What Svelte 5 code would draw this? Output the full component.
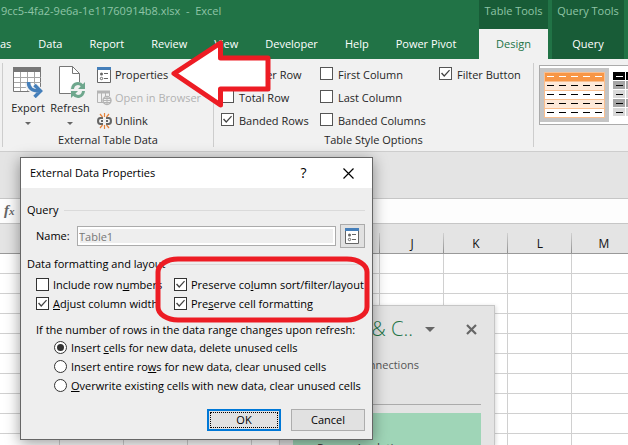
<script>
  const tabs = ['as', 'Data', 'Report', 'Review', 'View', 'Developer', 'Help', 'Power Pivot'];
  const columns = 'DEFGHIJKLM'.split('');
  const rows = Array.from({ length: 10 }, (_, i) => i + 1);

  const styleOptions = [
    [
      { label: 'Header Row', checked: true },
      { label: 'Total Row', checked: false },
      { label: 'Banded Rows', checked: true }
    ],
    [
      { label: 'First Column', checked: false },
      { label: 'Last Column', checked: false },
      { label: 'Banded Columns', checked: false }
    ],
    [{ label: 'Filter Button', checked: true }]
  ];

  const tableStyles = [
    { name: 'Orange', selected: true, line: '#fabf8f', colors: ['#f79646', '#fde9d9', '#ffffff', '#fde9d9', '#ffffff'] },
    { name: 'Black', selected: false, line: '#ffffff', colors: ['#000000', '#a6a6a6', '#d9d9d9', '#a6a6a6', '#d9d9d9'] }
  ];

  // [before, access key, after]
  const formatOptions = [
    { text: ['Include row n', 'u', 'mbers'], checked: false },
    { text: ['Preserve co', 'l', 'umn sort/filter/layout'], checked: true },
    { text: ['', 'A', 'djust column width'], checked: true },
    { text: ['Pre', 's', 'erve cell formatting'], checked: true }
  ];

  const refreshOptions = [
    { value: 'insert-cells', text: ['Insert ', 'c', 'ells for new data, delete unused cells'] },
    { value: 'insert-rows', text: ['Insert entire ro', 'w', 's for new data, clear unused cells'] },
    { value: 'overwrite', text: ['', 'O', 'verwrite existing cells with new data, clear unused cells'] }
  ];

  let refreshMode = 'insert-cells';
</script>

<div class="app">
  <header class="titlebar">
    <div class="main-tabs">
      <div class="filename">9cc5-4fa2-9e6a-1e11760914b8.xlsx&nbsp; -&nbsp; Excel</div>
      <nav class="tabs">
        {#each tabs as tab}
          <button type="button" class="tab">{tab}</button>
        {/each}
      </nav>
    </div>
    <div class="context">
      <div class="context-title">Table Tools</div>
      <button type="button" class="tab context-tab active">Design</button>
    </div>
    <div class="context query">
      <div class="context-title">Query Tools</div>
      <button type="button" class="tab context-tab">Query</button>
    </div>
  </header>

  <section class="ribbon">
    <div class="group external">
      <div class="group-body">
        <button type="button" class="big">
          <svg width="30" height="32" viewBox="0 0 30 32" aria-hidden="true">
            <path d="M.5 1.500h27v24H.5z" fill="#fff" stroke="#777" />
            <path d="M0 1h28v5H0z" fill="#777" />
            <path d="M1 11.500h27M1 16.500h27M1 21.500h27M7.500 6v19M14.500 6v19M21.500 6v19" stroke="#a6a6a6" />
            <path d="M15 17c0 6 4 8 12 8M21 19l6.500 6-6.500 6" fill="none" stroke="#f1f1f1" stroke-width="6" />
            <path d="M15.500 16c0 7 4 9 11 9M21.500 19l6 6-6 6" fill="none" stroke="#457fba" stroke-width="3.500" />
          </svg>
          <span>Export</span>
          <span class="caret"></span>
        </button>
        <button type="button" class="big">
          <svg width="30" height="32" viewBox="0 0 30 32" aria-hidden="true">
            <path d="M4.500.5h13l7 7v20h-20z" fill="#fff" stroke="#777" />
            <path d="M17.500.5v7h7" fill="none" stroke="#777" />
            <circle cx="23" cy="24" r="8" fill="#f1f1f1" />
            <g fill="none" stroke="#6ea78d" stroke-width="3">
              <path d="M17.500 23c.5-6 7-7 10-3M28.500 25c-.5 6-7 7-10 3" />
            </g>
            <path d="M30 16v7h-7zM16 32v-7h7z" fill="#6ea78d" />
          </svg>
          <span>Refresh</span>
          <span class="caret"></span>
        </button>
        <div class="small-list">
          <button type="button" class="small">
            <svg width="15" height="16" viewBox="0 0 15 16" aria-hidden="true">
              <path d="M.5.5h13v15H.5z" fill="#fff" stroke="#666" />
              <path d="M0 0h14v3H0z" fill="#457fba" />
              <circle cx="4.500" cy="7" r="1.500" fill="#666" />
              <circle cx="4.500" cy="11.500" r="1.200" fill="#fff" stroke="#666" />
              <path d="M7 6.500h4M7 11.500h4" stroke="#666" />
            </svg>
            Properties
          </button>
          <button type="button" class="small" disabled>
            <svg width="15" height="16" viewBox="0 0 15 16" fill="none" stroke="#b4b4b4" aria-hidden="true">
              <path d="M6 12.500H.5v-11h12V6M4.500 2v10M8.500 2v4" />
              <path d="M0 2h13" stroke-width="3" />
              <circle cx="10" cy="10.500" r="4" fill="#f1f1f1" stroke-width="1.500" />
              <path d="M6 10.500h8M10 6.500v8M7 8.500h6M7 12.500h6" />
            </svg>
            Open in Browser
          </button>
          <button type="button" class="small">
            <svg width="15" height="16" viewBox="0 0 15 16" fill="none" aria-hidden="true">
              <path d="M6 5H3.500Q1 5 1 8t2.500 3H6M9 5h2.500Q14 5 14 8t-2.500 3H9M4 8h2M9 8h2" stroke="#666" stroke-width="2" />
              <path d="M7.500 0v4M3 1l2.500 3M12 1L9.500 4M7.500 12v4M3 15l2.500-3M12 15l-2.500-3" stroke="#e8833a" stroke-width="1.200" />
            </svg>
            Unlink
          </button>
        </div>
      </div>
      <div class="group-title">External Table Data</div>
    </div>

    <div class="group options">
      <div class="group-body">
        {#each styleOptions as column}
          <div class="option-column">
            {#each column as option}
              <label class="option">
                <input type="checkbox" checked={option.checked} />
                {option.label}
              </label>
            {/each}
          </div>
        {/each}
      </div>
      <div class="group-title">Table Style Options</div>
    </div>

    <div class="gallery">
      {#each tableStyles as style}
        <button type="button" class="thumb" class:selected={style.selected} aria-label={style.name}>
          <svg width="61" height="46" viewBox="0 0 61 46">
            <rect width="61" height="46" fill={style.line} />
            {#each style.colors as color, r}
              {#if style.selected}
                <rect x="1" y={r * 9 + 1} width="59" height="8" fill={color} />
              {/if}
              {#each [0, 1, 2, 3, 4] as c}
                {#if !style.selected}
                  <rect x={c * 13} y={r * 9} width="12" height="8" fill={color} />
                {/if}
                <rect
                  x={c * (style.selected ? 12 : 13) + 3}
                  y={r * 9 + 4}
                  width="7"
                  height="1"
                  fill={r === 0 ? '#fff' : '#000'}
                />
              {/each}
            {/each}
          </svg>
        </button>
      {/each}
    </div>
  </section>

  <div class="formula-row">
    <span class="fx">f<small>x</small></span>
    <input type="text" aria-label="Formula bar" />
  </div>

  <main class="sheet">
    <table>
      <thead>
        <tr>
          {#each columns as column}
            <th scope="col">{column}</th>
          {/each}
        </tr>
      </thead>
      <tbody>
        {#each rows as row (row)}
          <tr>
            {#each columns as column}
              <td></td>
            {/each}
          </tr>
        {/each}
      </tbody>
    </table>
  </main>

  <aside class="pane">
    <div class="pane-header">
      <h2>Queries &amp; C..</h2>
      <span class="caret pane-caret"></span>
      <button type="button" class="pane-close" aria-label="Close pane">
        <svg width="11" height="11" viewBox="0 0 11 11" aria-hidden="true">
          <path d="M1 1l9 9M10 1l-9 9" stroke="#666" stroke-width="2.200" />
        </svg>
      </button>
    </div>
    <div class="pane-tabs">Queries | Connections</div>
    <div class="query-item">Power Analytics</div>
  </aside>

  <svg class="arrow" width="104" height="74" viewBox="0 0 104 74" aria-hidden="true">
    <path d="M6 36.500L52.500 6v15H100v31H52.500v16z" fill="#fff" stroke="#ed1c24" stroke-width="5" stroke-linejoin="round" />
  </svg>

  <div class="dialog" role="dialog" aria-labelledby="dialog-title">
    <div class="dialog-header">
      <h1 id="dialog-title">External Data Properties</h1>
      <button type="button" class="icon-button" aria-label="Help">?</button>
      <button type="button" class="icon-button" aria-label="Close">
        <svg width="11" height="11" viewBox="0 0 11 11" aria-hidden="true">
          <path d="M.5.5l10 10M10.500.5l-10 10" stroke="#000" stroke-width="1.200" />
        </svg>
      </button>
    </div>

    <form class="dialog-body" on:submit|preventDefault>
      <div class="section-title">Query</div>
      <div class="name-row">
        <label for="query-name">Name:</label>
        <input id="query-name" class="name-input" type="text" value="Table1" disabled />
        <button type="button" class="name-button" aria-label="Connection properties">
          <svg width="15" height="16" viewBox="0 0 15 16" aria-hidden="true">
            <path d="M.5.5h13v15H.5z" fill="#fff" stroke="#666" />
            <path d="M0 0h14v3H0z" fill="#457fba" />
            <circle cx="4.500" cy="7" r="1.500" fill="#666" />
            <circle cx="4.500" cy="11.500" r="1.200" fill="#fff" stroke="#666" />
            <path d="M7 6.500h4M7 11.500h4" stroke="#666" />
          </svg>
        </button>
      </div>

      <div class="section-title formatting">Data formatting and layout</div>
      <div class="format-grid">
        {#each formatOptions as option}
          <label class="choice">
            <input type="checkbox" checked={option.checked} />
            <span>{option.text[0]}<u>{option.text[1]}</u>{option.text[2]}</span>
          </label>
        {/each}
      </div>

      <fieldset>
        <legend>If the number of rows in the data range changes upon refresh:</legend>
        {#each refreshOptions as option}
          <label class="choice">
            <input type="radio" name="refresh" value={option.value} bind:group={refreshMode} />
            <span>{option.text[0]}<u>{option.text[1]}</u>{option.text[2]}</span>
          </label>
        {/each}
      </fieldset>

      <div class="buttons">
        <button type="submit" class="btn primary">OK</button>
        <button type="button" class="btn">Cancel</button>
      </div>
    </form>

    <svg class="highlight" width="216" height="68" viewBox="0 0 216 68" aria-hidden="true">
      <rect x="3" y="3" width="209" height="61" rx="20" ry="13" fill="none" stroke="#ed1c24" stroke-width="5" />
    </svg>
  </div>
</div>

<style>
  :global(body) {
    margin: 0;
  }

  .app {
    position: relative;
    height: 100vh;
    overflow: hidden;
    background: #e4e4e4;
    color: #262626;
    font-family: 'Open Sans', 'Noto Sans', sans-serif;
    font-size: 11px;
    line-height: 16px;
  }

  .app * {
    box-sizing: border-box;
  }

  button,
  input {
    font: inherit;
    color: inherit;
  }

  button {
    padding: 0;
    border: 0;
    background: none;
    white-space: nowrap;
  }

  svg {
    display: block;
    flex: none;
  }

  /* title bar and tabs */
  .titlebar {
    display: flex;
    height: 59px;
    padding-right: 4px;
    background: #217346;
    color: #fff;
  }

  .main-tabs {
    flex: 1;
    min-width: 0;
  }

  .filename {
    padding: 3px 1px 14px;
    color: #8fc4a6;
    white-space: pre;
  }

  .tabs {
    display: flex;
    gap: 27px;
  }

  .tab {
    height: 22px;
  }

  .context {
    display: flex;
    flex-direction: column;
    flex: none;
    width: 69px;
    background: #185c37;
    text-align: center;
  }

  .query {
    width: 72px;
    margin-left: 4px;
  }

  .context-title {
    height: 29px;
    padding-top: 3px;
    color: #8fc4a6;
    white-space: nowrap;
  }

  .context-tab {
    height: 30px;
  }

  .active {
    background: #f1f1f1;
    color: #217346;
  }

  /* ribbon */
  .ribbon {
    display: flex;
    height: 93px;
    padding: 4px 0 4px 2px;
    background: #f1f1f1;
    border-bottom: 1px solid #cdcdcd;
  }

  .group {
    display: flex;
    flex-direction: column;
    justify-content: space-between;
    flex: none;
    border-right: 1px solid #cdcdcd;
  }

  .external {
    width: 212px;
    border-left: 1px solid #cdcdcd;
  }

  .options {
    width: 320px;
  }

  .group-body {
    display: flex;
  }

  .group-title {
    text-align: center;
  }

  .big {
    display: flex;
    flex-direction: column;
    align-items: center;
    flex: none;
    width: 42px;
    padding-top: 3px;
  }

  .external .group-body {
    padding-left: 4px;
  }

  .big span:first-of-type {
    margin-top: 2px;
  }

  .caret {
    width: 0;
    height: 0;
    margin-top: 6px;
    border: 3px solid transparent;
    border-top-color: #666;
    border-bottom: 0;
  }

  .small-list {
    padding-left: 6px;
  }

  .small {
    display: flex;
    align-items: center;
    gap: 3px;
    height: 23px;
  }

  .small:disabled {
    color: #b1b1b1;
  }

  .options .group-body {
    padding-left: 7px;
  }

  .option-column {
    flex: none;
    width: 99px;
  }

  .option-column:nth-child(2) {
    width: 119px;
  }

  .option-column:last-child {
    flex: 1;
    width: auto;
  }

  .option {
    display: flex;
    align-items: center;
    gap: 5px;
    height: 23px;
    white-space: nowrap;
  }

  input[type='checkbox'],
  input[type='radio'] {
    display: grid;
    place-content: center;
    flex: none;
    width: 13px;
    height: 13px;
    margin: 0;
    border: 1px solid #555;
    background: #fff;
    appearance: none;
  }

  input[type='checkbox']:checked::after {
    content: '';
    width: 9px;
    height: 9px;
    background: #444;
    clip-path: polygon(0 50%, 12% 40%, 36% 66%, 90% 8%, 100% 18%, 36% 88%);
  }

  .option input[type='checkbox'] {
    margin-top: -2px;
  }

  input[type='radio'] {
    border-radius: 50%;
  }

  input[type='radio']:checked::after {
    content: '';
    width: 7px;
    height: 7px;
    border-radius: 50%;
    background: #333;
  }

  .gallery {
    display: flex;
    flex: 1;
    height: 60px;
    margin: 2px 0 0 5px;
    padding: 2px 0;
    border: 1px solid #ababab;
    border-right: 0;
    background: #fff;
    overflow: hidden;
  }

  .thumb {
    flex: none;
    padding: 4px;
  }

  .selected {
    background: #c5c5c5;
  }

  /* formula bar */
  .formula-row {
    display: flex;
    height: 26px;
    margin-top: 46px;
    border: 1px solid #c6c6c6;
    border-width: 1px 0;
    background: #fdfdfd;
  }

  .fx {
    width: 22px;
    padding: 3px 0 0 4px;
    color: #666;
    font-family: 'Liberation Serif', serif;
    font-size: 15px;
    font-style: italic;
    font-weight: bold;
  }

  .fx small {
    font-size: 11px;
  }

  .formula-row input {
    flex: 1;
    border: 0;
    background: none;
  }

  /* sheet */
  .sheet {
    overflow: hidden;
  }

  table {
    width: 100%;
    min-width: 636px;
    table-layout: fixed;
    border-collapse: separate;
    border-spacing: 0;
  }

  th {
    width: 64px;
    height: 30px;
    padding: 10px 0 0;
    border-bottom: 1px solid #999;
    background: linear-gradient(#d0d0d0, #909090) right bottom / 1px 20px no-repeat;
    color: #111;
    font-size: 12px;
    font-weight: normal;
  }

  th:first-child {
    width: 60px;
  }

  th:last-child {
    width: auto;
  }

  td {
    height: 20px;
    padding: 0;
    border: 1px solid #d0d0d0;
    border-width: 0 1px 1px 0;
    background: #fff;
  }

  /* queries pane */
  .pane {
    position: absolute;
    top: 305px;
    bottom: 0;
    left: 279px;
    width: 216px;
    padding: 9px 13px 0;
    border: 1px solid #c6c6c6;
    border-bottom: 0;
    background: #e4e4e4;
    box-shadow: 1px 1px 4px rgba(0, 0, 0, 0.15);
    overflow: hidden;
  }

  .pane-header {
    display: flex;
    align-items: center;
    height: 28px;
  }

  h2 {
    width: 120px;
    margin: 0;
    color: #217346;
    font-size: 20px;
    font-weight: 300;
    line-height: 28px;
    text-align: right;
    white-space: nowrap;
  }

  .pane-caret {
    margin: 0 0 0 12px;
    border-width: 5px;
    border-bottom: 0;
  }

  .pane-close {
    margin: 0 4px 0 auto;
  }

  .pane-tabs {
    width: 126px;
    height: 62px;
    padding-top: 14px;
    color: #555;
    text-align: right;
    white-space: nowrap;
  }

  .query-item {
    height: 60px;
    margin-top: 8px;
    padding: 28px 24px 0;
    background: #9fd5b7;
    color: #444;
    font-size: 12px;
    box-shadow: 0 -8px #e4e4e4, 0 -9px #ababab;
  }

  .arrow {
    position: absolute;
    top: 37px;
    left: 168px;
  }

  /* dialog */
  .dialog {
    position: absolute;
    top: 157px;
    left: 20px;
    width: 353px;
    border: 1px solid #666;
    background: #eee;
    color: #000;
    box-shadow: 0 3px 14px rgba(0, 0, 0, 0.4);
  }

  .dialog-header {
    display: flex;
    align-items: center;
    height: 30px;
    padding: 0 18px 0 9px;
    background: #fff;
  }

  h1 {
    flex: 1;
    margin: 0;
    font-size: 11px;
    font-weight: normal;
  }

  .icon-button {
    display: flex;
    justify-content: center;
    width: 11px;
    margin-left: 34px;
    font-size: 14px;
  }

  .dialog-body {
    padding: 14px 7px 8px 6px;
  }

  .section-title {
    display: flex;
    align-items: center;
    gap: 5px;
    white-space: nowrap;
  }

  .section-title::after {
    content: '';
    flex: 1;
    height: 1px;
    background: #dadada;
  }

  .name-row {
    display: flex;
    align-items: center;
    height: 24px;
    margin-top: 6px;
    padding-left: 9px;
  }

  .name-row label {
    width: 41px;
  }

  .name-input {
    flex: 1;
    min-width: 0;
    height: 20px;
    margin-right: 4px;
    padding: 0 1px;
    border: 1px solid #ababab;
    background: #eee;
    box-shadow: inset 0 0 0 2px #fff;
    color: #777;
  }

  .name-button {
    display: flex;
    align-items: center;
    justify-content: center;
    width: 25px;
    height: 24px;
    border: 1px solid #ababab;
    background: #e1e1e1;
  }

  .formatting {
    margin-top: 8px;
  }

  .format-grid {
    display: grid;
    grid-template-columns: 138px 1fr;
    margin-top: 3px;
    padding-left: 9px;
  }

  .choice {
    display: flex;
    align-items: center;
    gap: 4px;
    height: 19px;
    white-space: nowrap;
  }

  .dialog input[type='checkbox'],
  .dialog input[type='radio'] {
    border-color: #333;
  }

  fieldset {
    margin: 9px 0 0;
    padding: 0 0 0 27px;
    border: 0;
  }

  legend {
    margin-left: -18px;
    padding: 0;
  }

  .buttons {
    display: flex;
    justify-content: flex-end;
    gap: 10px;
    margin-top: 14px;
  }

  .btn {
    width: 74px;
    height: 22px;
    border: 1px solid #adadad;
    background: #e1e1e1;
  }

  .primary {
    border: 2px solid #0078d7;
    outline: 1px dotted #000;
    outline-offset: -4px;
  }

  .highlight {
    position: absolute;
    top: 98px;
    left: 134px;
  }
</style>
